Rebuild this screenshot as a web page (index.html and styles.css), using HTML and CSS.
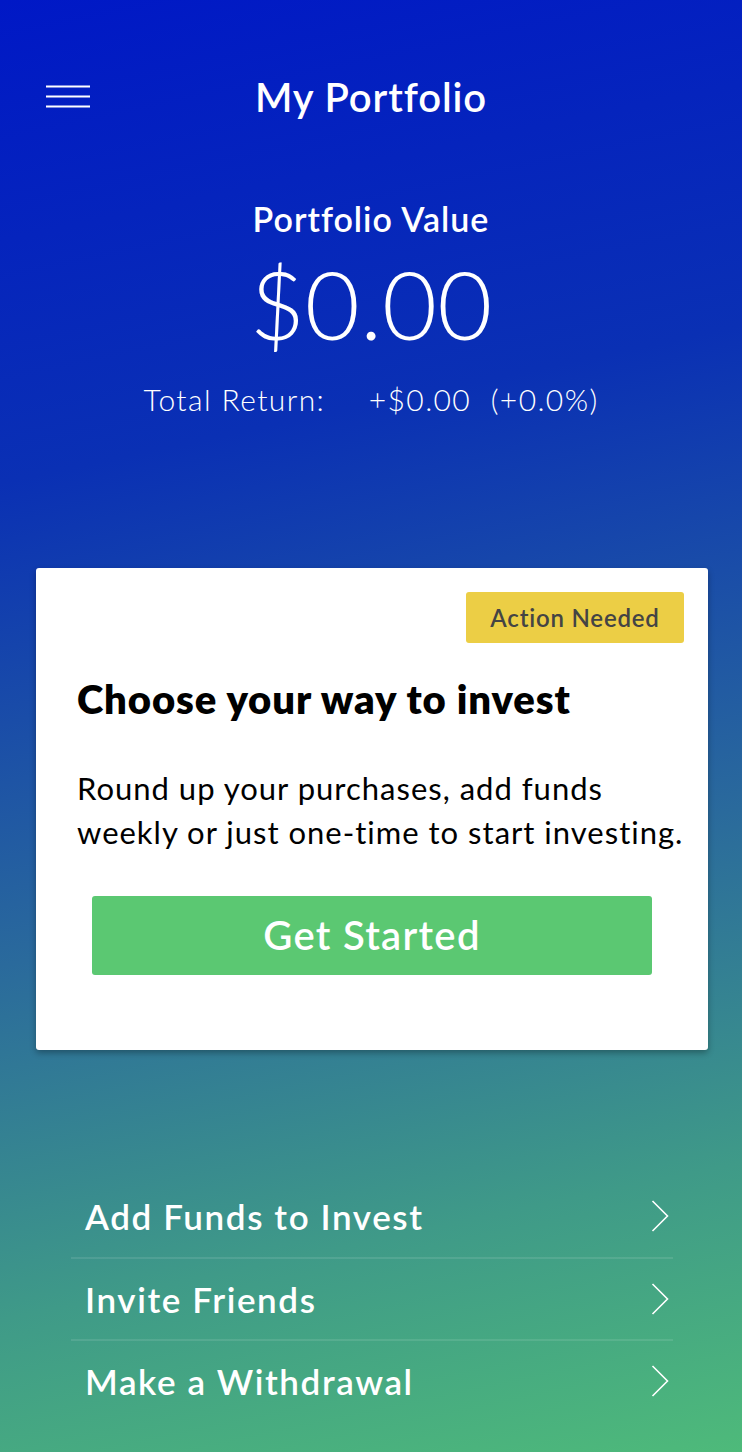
FILE: index.html
```html
<!DOCTYPE html>
<html lang="en">
<head>
    <meta charset="UTF-8">
    <meta name="viewport" content="width=device-width, initial-scale=1.0">
    <title>My Portfolio</title>
    <link rel="stylesheet" href="styles.css">
</head>
<body>
    <div class="screen">
        <div class="topbar">
            <a href="javascript:void(0)" class="menu">
                <svg width="44" height="24" viewBox="0 0 44 24">
                    <path d="M0 1.5H44M0 11.5H44M0 21.5H44" stroke="#fff" stroke-width="2" fill="none"/>
                </svg>
            </a>
            <h1 class="title">My Portfolio</h1>
            <span></span>
        </div>

        <div class="summary">
            <div class="summary-label">Portfolio Value</div>
            <div class="summary-value">$0.00</div>
            <div class="summary-return">
                <span class="return-label">Total Return:</span>
                <span class="return-amount">+$0.00</span>
                <span class="return-pct">(+0.0%)</span>
            </div>
        </div>

        <div class="card">
            <div class="card-top">
                <span class="badge">Action Needed</span>
            </div>
            <h2 class="card-title">Choose your way to invest</h2>
            <p class="card-text">Round up your purchases, add funds weekly or just one-time to start investing.</p>
            <a href="javascript:void(0)" class="btn">Get Started</a>
        </div>

        <ul class="links">
            <li>
                <a href="javascript:void(0)">Add Funds to Invest
                    <svg class="chev" width="18" height="32" viewBox="0 0 18 32"><path d="M1.5 1L16.5 16L1.5 31" stroke="#fff" stroke-width="1.6" fill="none"/></svg>
                </a>
            </li>
            <li>
                <a href="javascript:void(0)">Invite Friends
                    <svg class="chev" width="18" height="32" viewBox="0 0 18 32"><path d="M1.5 1L16.5 16L1.5 31" stroke="#fff" stroke-width="1.6" fill="none"/></svg>
                </a>
            </li>
            <li>
                <a href="javascript:void(0)">Make a Withdrawal
                    <svg class="chev" width="18" height="32" viewBox="0 0 18 32"><path d="M1.5 1L16.5 16L1.5 31" stroke="#fff" stroke-width="1.6" fill="none"/></svg>
                </a>
            </li>
        </ul>
    </div>
</body>
</html>
```

FILE: styles.css
```css
* {
    margin: 0;
    padding: 0;
    box-sizing: border-box;
    text-decoration: none;
    list-style: none;
}

body {
    font-family: Lato, "Open Sans", sans-serif;
    color: #fff;
}

.screen {
    width: 742px;
    height: 1452px;
    overflow: hidden;
    background: linear-gradient(168deg, #0018c6 0%, #0a30b4 30%, #2a6a9c 60%, #3f9a88 82%, #4eba7a 100%);
}

.topbar {
    display: grid;
    grid-template-columns: 1fr auto 1fr;
    align-items: center;
    height: 60px;
    margin-top: 67px;
    padding: 0 46px;
}

.menu {
    display: flex;
    width: 44px;
}

.title {
    font-size: 40px;
    font-weight: 600;
    line-height: 60px;
    letter-spacing: .9px;
    text-align: center;
}

.summary {
    text-align: center;
}

.summary-label {
    margin-top: 72px;
    font-size: 34px;
    font-weight: 600;
    line-height: 40px;
    letter-spacing: 1px;
}

.summary-value {
    margin-top: 14px;
    font-size: 95px;
    font-weight: 300;
    line-height: 100px;
}

.summary-return {
    margin-top: 26px;
    font-size: 30px;
    font-weight: 300;
    line-height: 40px;
    letter-spacing: 1.4px;
}

.return-amount {
    margin-left: 34px;
}

.return-pct {
    margin-left: 10px;
}

.card {
    margin: 149px 34px 0 36px;
    padding: 24px 24px 75px 41px;
    background-color: #fff;
    border-radius: 3px;
    box-shadow: 0 3px 6px rgba(0, 0, 0, .3);
    color: #000;
}

.card-top {
    display: flex;
    justify-content: flex-end;
}

.badge {
    width: 218px;
    height: 51px;
    line-height: 51px;
    text-align: center;
    font-size: 24px;
    font-weight: 600;
    letter-spacing: .8px;
    color: #444;
    background-color: #ecce45;
    border-radius: 3px;
}

.card-title {
    margin-top: 32px;
    font-size: 40px;
    font-weight: 800;
    line-height: 48px;
    letter-spacing: .9px;
}

.card-text {
    margin-top: 43px;
    font-size: 31px;
    line-height: 44px;
    letter-spacing: 1px;
}

.btn {
    display: block;
    margin: 42px 32px 0 15px;
    height: 79px;
    line-height: 79px;
    text-align: center;
    font-size: 40px;
    font-weight: 600;
    letter-spacing: 1.3px;
    color: #fff;
    background-color: #5bc872;
    border-radius: 3px;
}

.links {
    margin: 125px 69px 0 71px;
}

.links li {
    height: 82px;
}

.links li + li {
    border-top: 2px solid rgba(255, 255, 255, .1);
}

.links a {
    display: flex;
    justify-content: space-between;
    align-items: center;
    height: 100%;
    padding: 0 4px 0 14px;
    font-size: 35px;
    font-weight: 600;
    letter-spacing: 1.6px;
    color: #fff;
}
```
